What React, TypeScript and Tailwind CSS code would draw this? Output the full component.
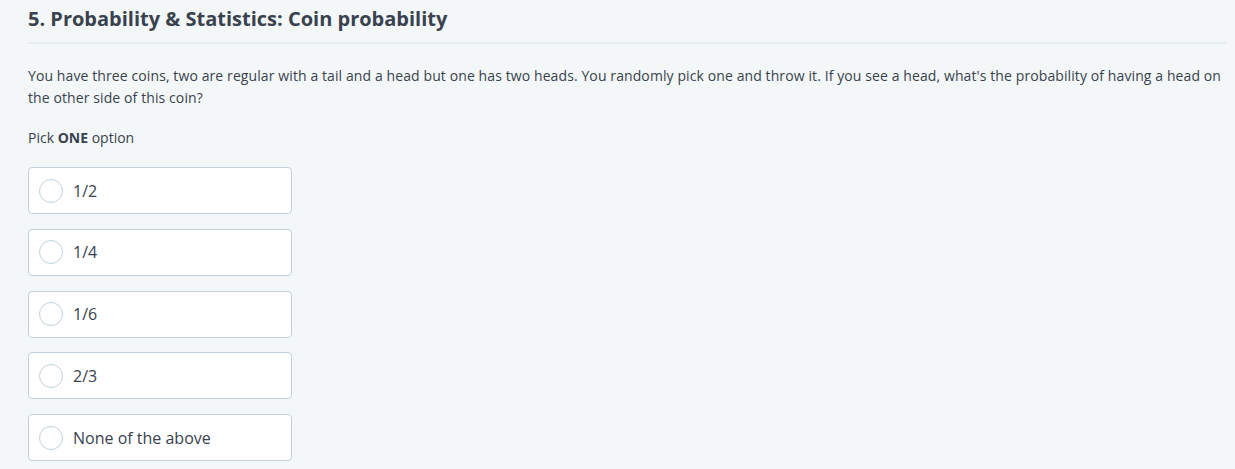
import React from 'react';

const options = ['1/2', '1/4', '1/6', '2/3', 'None of the above'];

const App: React.FC = () => {
  return (
    <div
      className="min-h-[469px] bg-[#f3f7f7] text-[#39424e]"
      style={{ fontFamily: '"Open Sans", "Liberation Sans", sans-serif' }}
    >
      <div className="pl-[28px] pr-[8px]">
        <h1 className="pt-[6px] pb-[10px] text-[20px] leading-[26px] font-bold border-b-2 border-[#e7ecec]">
          5. Probability &amp; Statistics: Coin probability
        </h1>

        <p className="mt-[21px] text-[14px] leading-[22px] tracking-[0.1px]">
          You have three coins, two are regular with a tail and a head but one has two heads. You randomly pick one and throw it. If you see a head, what's the probability of having a head on the other side of this coin?
        </p>

        <p className="mt-[18px] text-[14px] leading-[22px]">
          Pick <b>ONE</b> option
        </p>

        {/* Options */}
        <div className="mt-[18px] flex flex-col gap-[14.75px]">
          {options.map((opt) => (
            <label
              key={opt}
              className="w-[264px] h-[47px] flex items-center gap-[10px] px-[10px] bg-white border border-[#c2d1d9] rounded-[4px] cursor-pointer"
            >
              <span className="w-[24px] h-[24px] rounded-full border border-[#c2d1d9] bg-white shrink-0" />
              <span className="text-[16px]">{opt}</span>
            </label>
          ))}
        </div>
      </div>
    </div>
  );
};

export default App;
